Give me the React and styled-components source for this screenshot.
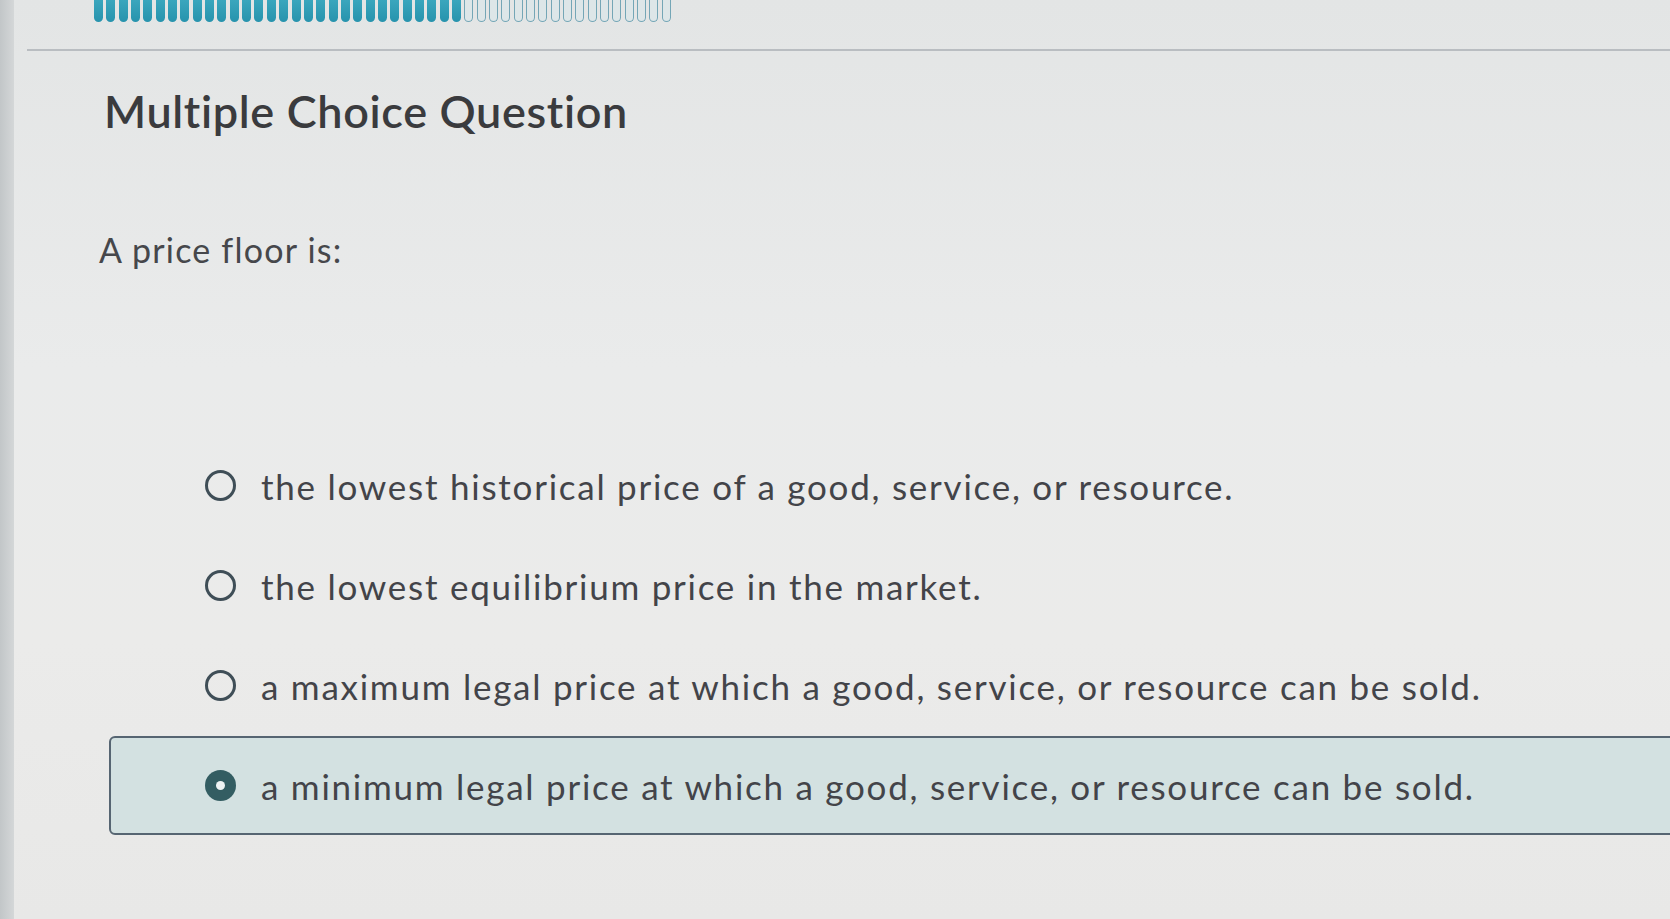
import React from "react";
import styled, { createGlobalStyle } from "styled-components";

const Global = createGlobalStyle`
  html, body { margin: 0; padding: 0; }
  body {
    background: #e7e8e8;
    font-family: Lato, "Open Sans", sans-serif;
    overflow: hidden;
  }
`;

const Frame = styled.div`
  display: flex;
  width: 1670px;
  height: 919px;
  overflow: hidden;
  background: linear-gradient(180deg, #e3e5e5 0%, #eaebeb 40%, #ebebea 70%, #e8e8e7 100%);
`;

const Bezel = styled.div`
  flex: 0 0 14px;
  background: linear-gradient(90deg, #c2c6c8 0%, #d4d7d8 100%);
`;

const Screen = styled.div`
  flex: 1;
  display: flex;
  flex-direction: column;
  min-width: 0;
`;

const Progress = styled.div`
  display: flex;
  gap: 3.35px;
  height: 22px;
  padding-left: 80px;
`;

const Tick = styled.div`
  width: 9px;
  height: 100%;
  box-sizing: border-box;
  border-radius: 0 0 4.5px 4.5px;
  background: ${(p) => (p.$done ? "linear-gradient(180deg, #3aa6bd 0%, #2793ad 100%)" : "#dde6e8")};
  border: ${(p) => (p.$done ? "none" : "1.5px solid #74a6b6")};
  border-top: none;
`;

const Divider = styled.div`
  height: 2px;
  margin: 27px 0 0 13px;
  background: #b9bdc1;
`;

const Content = styled.div`
  display: flex;
  flex-direction: column;
  padding-left: 85px;
`;

const Heading = styled.h1`
  margin: 32px 0 0 5px;
  font-size: 45px;
  line-height: 56px;
  font-weight: 600;
  color: #3a3b3e;
  letter-spacing: 0.65px;
`;

const Prompt = styled.p`
  margin: 91px 0 0 0;
  font-size: 34px;
  line-height: 40px;
  font-weight: 400;
  color: #46474b;
  letter-spacing: 1.2px;
`;

const Options = styled.div`
  display: flex;
  flex-direction: column;
  gap: 1px;
  margin-top: 166px;
  margin-left: 10px;
  margin-right: -40px;
`;

const Option = styled.label`
  display: flex;
  align-items: center;
  gap: 25px;
  height: 99px;
  box-sizing: border-box;
  padding-left: 94px;
  border: 2px solid ${(p) => (p.$selected ? "#566572" : "transparent")};
  border-radius: 6px;
  background: ${(p) => (p.$selected ? "#d3e1e1" : "transparent")};
`;

const Radio = styled.span`
  position: relative;
  flex: 0 0 31px;
  width: 31px;
  height: 31px;
  box-sizing: border-box;
  border-radius: 50%;
  border: ${(p) => (p.$checked ? "none" : "3.5px solid #3f4e57")};
  background: ${(p) => (p.$checked ? "#335d62" : "transparent")};
  &::after {
    content: "";
    display: ${(p) => (p.$checked ? "block" : "none")};
    position: absolute;
    left: 50%;
    top: 50%;
    width: 9px;
    height: 9px;
    margin: -4.5px 0 0 -4.5px;
    border-radius: 50%;
    background: #eef3f3;
  }
`;

const OptionText = styled.span`
  font-size: 35px;
  line-height: 40px;
  color: #434449;
  letter-spacing: 1.75px;
  white-space: nowrap;
`;

const options = [
  "the lowest historical price of a good, service, or resource.",
  "the lowest equilibrium price in the market.",
  "a maximum legal price at which a good, service, or resource can be sold.",
  "a minimum legal price at which a good, service, or resource can be sold.",
];

export default function App() {
  const selected = 3;
  return (
    <>
      <Global />
      <Frame>
        <Bezel />
        <Screen>
          <Progress>
            {Array.from({ length: 47 }, (_, i) => (
              <Tick key={i} $done={i < 30} />
            ))}
          </Progress>
          <Divider />
          <Content>
            <Heading>Multiple Choice Question</Heading>
            <Prompt>A price floor is:</Prompt>
            <Options>
              {options.map((t, i) => (
                <Option key={i} $selected={i === selected}>
                  <Radio $checked={i === selected} />
                  <OptionText>{t}</OptionText>
                </Option>
              ))}
            </Options>
          </Content>
        </Screen>
      </Frame>
    </>
  );
}
